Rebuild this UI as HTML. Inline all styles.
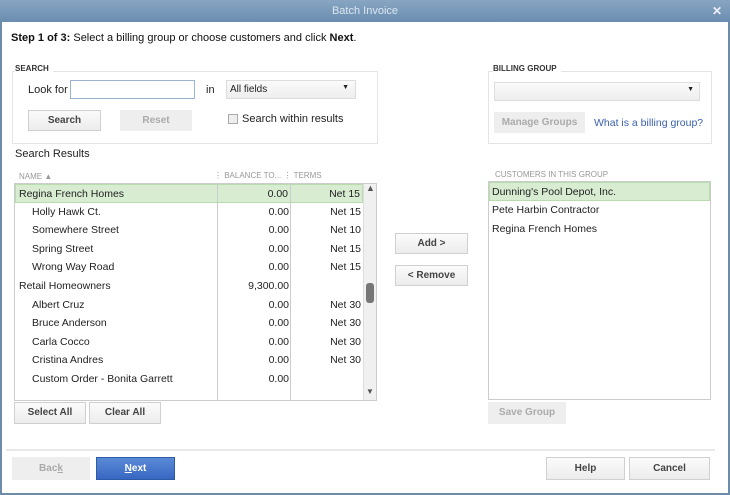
<!DOCTYPE html>
<html><head><style>
*{box-sizing:border-box;margin:0;padding:0}
body{width:730px;height:495px;background:#fff;font-family:"Liberation Sans",sans-serif;font-size:11px;color:#222;position:relative;overflow:hidden}
.a{position:absolute}
.title{left:0;top:0;width:730px;height:22px;background:linear-gradient(#88a6c2,#6a8db0);color:#dce6f0;text-align:center;line-height:22px;font-size:11px}
.frame{left:0;top:22px;width:730px;height:473px;border-left:2px solid #6c8caa;border-right:2px solid #6c8caa;border-bottom:2px solid #6c8caa}
.fs{border:1px solid #e4e4e4}
.lbl{font-size:8px;font-weight:bold;color:#333;background:#fff;padding-right:4px}
.btn{border:1px solid #d0d0d0;background:linear-gradient(#fbfbfb,#ececec);text-align:center;font-weight:bold;color:#444;font-size:10px}
.dis{background:#eee;border-color:#eee;color:#aaa}
.row{position:absolute;left:0;height:18.6px;line-height:18.6px;width:348px;font-size:10.5px}
.row span{position:absolute}
</style></head><body>
<div class="a title">Batch Invoice</div>
<div class="a" style="right:8px;top:4px;color:#eef;font-weight:bold;font-size:12px">✕</div>
<div class="a frame"></div>
<div class="a" style="left:11px;top:32px;font-size:11px;color:#111"><b>Step 1 of 3:</b> Select a billing group or choose customers and click <b>Next</b>.</div>

<div class="a fs" style="left:12px;top:71px;width:366px;height:73px"></div>
<div class="a lbl" style="left:15px;top:64px">SEARCH</div>
<div class="a" style="left:28px;top:84px">Look for</div>
<div class="a" style="left:70px;top:80px;width:125px;height:19px;border:1px solid #9bb3cf;background:#fff"></div>
<div class="a" style="left:206px;top:84px">in</div>
<div class="a" style="left:226px;top:80px;width:130px;height:19px;border:1px solid #ddd;background:linear-gradient(#fafafa,#eee);padding:3px;font-size:10px">All fields<span style="position:absolute;right:6px;top:3px;font-size:7px">▼</span></div>
<div class="a btn" style="left:28px;top:110px;width:73px;height:21px;line-height:19px">Search</div>
<div class="a btn dis" style="left:120px;top:110px;width:72px;height:21px;line-height:19px">Reset</div>
<div class="a" style="left:228px;top:114px;width:10px;height:10px;border:1px solid #aaa;background:#eee"></div>
<div class="a" style="left:242px;top:113px">Search within results</div>
<div class="a" style="left:15px;top:148px">Search Results</div>
<div class="a" style="left:19px;top:172px;font-size:8px;color:#999">NAME &#9650;</div>
<div class="a" style="left:214px;top:171px;font-size:8px;color:#999">⋮ BALANCE TO...&nbsp;⋮ TERMS</div>

<div class="a" style="left:14px;top:183px;width:363px;height:218px;border:1px solid #ccc;overflow:hidden">
 <div class="row" style="top:0;background:#d8ecd2;border:1px solid #b9dcae"><span style="left:3px">Regina French Homes</span><span style="right:74px">0.00</span><span style="right:2px">Net 15</span></div>
 <div class="a" style="left:202px;top:0;width:1px;height:218px;background:#ccc"></div>
 <div class="a" style="left:275px;top:0;width:1px;height:218px;background:#ccc"></div>
 <div class="a" style="left:348px;top:0;width:14px;height:218px;background:#f0f0f0;border-left:1px solid #ddd"></div>
 <div class="a" style="left:351px;top:-1px;font-size:9px;color:#555">▲</div>
 <div class="a" style="left:351px;top:203px;font-size:8px;color:#555">▼</div>
 <div class="a" style="left:351px;top:99px;width:8px;height:20px;border-radius:3px;background:#777"></div>
 <div class="row" style="top:18.6px"><span style="left:17px">Holly Hawk Ct.</span><span style="right:74px">0.00</span><span style="right:2px">Net 15</span></div>
 <div class="row" style="top:37.2px"><span style="left:17px">Somewhere Street</span><span style="right:74px">0.00</span><span style="right:2px">Net 10</span></div>
 <div class="row" style="top:55.8px"><span style="left:17px">Spring Street</span><span style="right:74px">0.00</span><span style="right:2px">Net 15</span></div>
 <div class="row" style="top:74.4px"><span style="left:17px">Wrong Way Road</span><span style="right:74px">0.00</span><span style="right:2px">Net 15</span></div>
 <div class="row" style="top:93px"><span style="left:4px">Retail Homeowners</span><span style="right:74px">9,300.00</span></div>
 <div class="row" style="top:111.6px"><span style="left:17px">Albert Cruz</span><span style="right:74px">0.00</span><span style="right:2px">Net 30</span></div>
 <div class="row" style="top:130.2px"><span style="left:17px">Bruce Anderson</span><span style="right:74px">0.00</span><span style="right:2px">Net 30</span></div>
 <div class="row" style="top:148.8px"><span style="left:17px">Carla Cocco</span><span style="right:74px">0.00</span><span style="right:2px">Net 30</span></div>
 <div class="row" style="top:167.4px"><span style="left:17px">Cristina Andres</span><span style="right:74px">0.00</span><span style="right:2px">Net 30</span></div>
 <div class="row" style="top:186px"><span style="left:17px">Custom Order - Bonita Garrett</span><span style="right:74px">0.00</span></div>
</div>
<div class="a btn" style="left:14px;top:402px;width:72px;height:22px;line-height:20px">Select All</div>
<div class="a btn" style="left:89px;top:402px;width:72px;height:22px;line-height:20px">Clear All</div>
<div class="a btn" style="left:395px;top:233px;width:73px;height:21px;line-height:19px">Add &gt;</div>
<div class="a btn" style="left:395px;top:265px;width:73px;height:21px;line-height:19px">&lt; Remove</div>

<div class="a fs" style="left:488px;top:71px;width:224px;height:73px"></div>
<div class="a lbl" style="left:493px;top:64px">BILLING GROUP</div>
<div class="a" style="left:494px;top:82px;width:206px;height:19px;border:1px solid #ddd;background:linear-gradient(#fafafa,#eee)"><span style="position:absolute;right:5px;top:3px;font-size:7px">▼</span></div>
<div class="a btn dis" style="left:494px;top:112px;width:91px;height:21px;line-height:19px">Manage Groups</div>
<div class="a" style="left:594px;top:117px;color:#3a5fae;font-size:10.5px">What is a billing group?</div>
<div class="a" style="left:495px;top:170px;font-size:8px;color:#999">CUSTOMERS IN THIS GROUP</div>
<div class="a" style="left:488px;top:181px;width:223px;height:219px;border:1px solid #ccc">
 <div class="row" style="top:0;width:221px;background:#d8ecd2;border:1px solid #b9dcae"><span style="left:2px">Dunning's Pool Depot, Inc.</span></div>
 <div class="row" style="top:19px;width:221px"><span style="left:3px">Pete Harbin Contractor</span></div>
 <div class="row" style="top:38px;width:221px"><span style="left:3px">Regina French Homes</span></div>
</div>
<div class="a btn dis" style="left:488px;top:402px;width:78px;height:22px;line-height:20px">Save Group</div>

<div class="a" style="left:6px;top:449px;width:709px;height:2px;background:#e8e8e8"></div>
<div class="a btn dis" style="left:12px;top:457px;width:78px;height:23px;line-height:21px">Bac<u>k</u></div>
<div class="a btn" style="left:96px;top:457px;width:79px;height:23px;line-height:21px;background:linear-gradient(#5b8ad6,#3767c2);border-color:#2f5aa8;color:#fff"><u>N</u>ext</div>
<div class="a btn" style="left:546px;top:457px;width:79px;height:23px;line-height:21px">Help</div>
<div class="a btn" style="left:629px;top:457px;width:81px;height:23px;line-height:21px">Cancel</div>
</body></html>
